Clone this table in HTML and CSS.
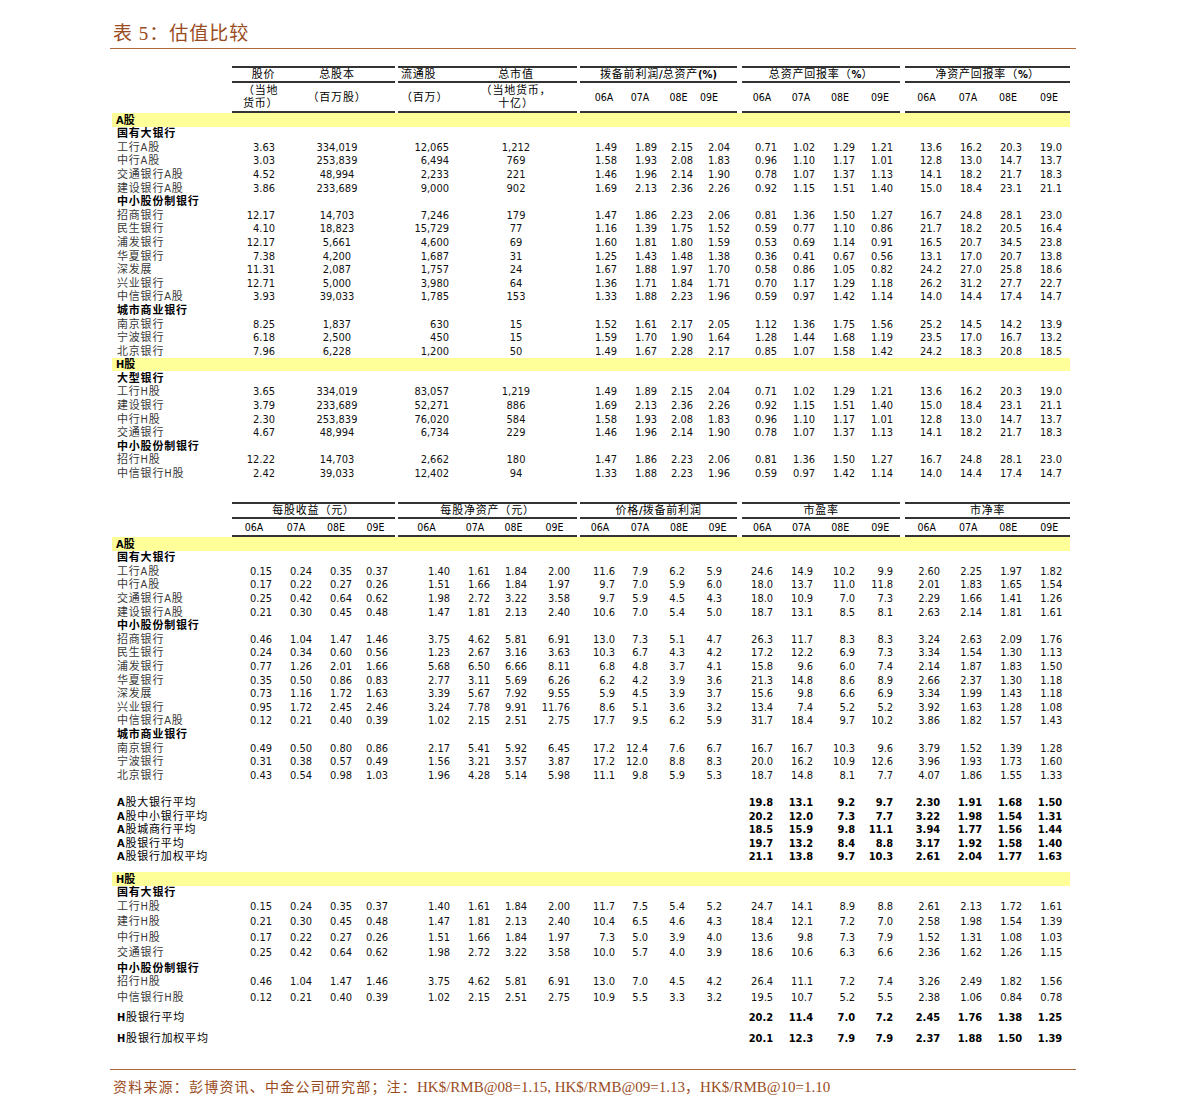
FILE: index.html
```html
<!DOCTYPE html>
<html lang="zh-CN">
<head>
<meta charset="utf-8">
<title>表 5：估值比较</title>
<link rel="stylesheet" href="styles.css">
</head>
<body>
<div class="page">
<h1 class="title">表 5：估值比较</h1>

<table class="tbl t1">
<colgroup><col class="w120"><col class="w63"><col class="w100"><col class="w3"><col class="w72"><col class="w107"><col class="w3"><col class="w40"><col class="w40"><col class="w37"><col class="w40"><col class="w5"><col class="w40"><col class="w38"><col class="w40"><col class="w40"><col class="w5"><col class="w43"><col class="w40"><col class="w40"><col class="w42"></colgroup>
<thead>
<tr class="h1"><th></th><th class="g">股价</th><th class="g pr16">总股本</th><th></th><th class="g l">流通股</th><th class="g pr15">总市值</th><th></th><th class="g" colspan="4">拨备前利润<b>/</b>总资产<b>(%)</b></th><th></th><th class="g" colspan="4">总资产回报率（<b>%</b>）</th><th></th><th class="g" colspan="4">净资产回报率（<b>%</b>）</th></tr>
<tr class="h2"><th></th><th class="s l2">（当地<br>货币）</th><th class="s pr16">（百万股）</th><th></th><th class="s l">（百万）</th><th class="s pr15">（当地货币，<br>十亿）</th><th></th><th class="s n pl8">06A</th><th class="s n">07A</th><th class="s n">08E</th><th class="s n pr16">09E</th><th></th><th class="s n">06A</th><th class="s n">07A</th><th class="s n">08E</th><th class="s n">09E</th><th></th><th class="s n">06A</th><th class="s n">07A</th><th class="s n">08E</th><th class="s n">09E</th></tr>
</thead>
<tbody>
<tr class="b"><td colspan="21"><b>A</b>股</td></tr>
<tr class="c"><td colspan="21">国有大银行</td></tr>
<tr class="d"><td>工行A股</td><td>3.63</td><td>334,019</td><td></td><td>12,065</td><td>1,212</td><td></td><td>1.49</td><td>1.89</td><td>2.15</td><td>2.04</td><td></td><td>0.71</td><td>1.02</td><td>1.29</td><td>1.21</td><td></td><td>13.6</td><td>16.2</td><td>20.3</td><td>19.0</td></tr>
<tr class="d"><td>中行A股</td><td>3.03</td><td>253,839</td><td></td><td>6,494</td><td>769</td><td></td><td>1.58</td><td>1.93</td><td>2.08</td><td>1.83</td><td></td><td>0.96</td><td>1.10</td><td>1.17</td><td>1.01</td><td></td><td>12.8</td><td>13.0</td><td>14.7</td><td>13.7</td></tr>
<tr class="d"><td>交通银行A股</td><td>4.52</td><td>48,994</td><td></td><td>2,233</td><td>221</td><td></td><td>1.46</td><td>1.96</td><td>2.14</td><td>1.90</td><td></td><td>0.78</td><td>1.07</td><td>1.37</td><td>1.13</td><td></td><td>14.1</td><td>18.2</td><td>21.7</td><td>18.3</td></tr>
<tr class="d"><td>建设银行A股</td><td>3.86</td><td>233,689</td><td></td><td>9,000</td><td>902</td><td></td><td>1.69</td><td>2.13</td><td>2.36</td><td>2.26</td><td></td><td>0.92</td><td>1.15</td><td>1.51</td><td>1.40</td><td></td><td>15.0</td><td>18.4</td><td>23.1</td><td>21.1</td></tr>
<tr class="c"><td colspan="21">中小股份制银行</td></tr>
<tr class="d"><td>招商银行</td><td>12.17</td><td>14,703</td><td></td><td>7,246</td><td>179</td><td></td><td>1.47</td><td>1.86</td><td>2.23</td><td>2.06</td><td></td><td>0.81</td><td>1.36</td><td>1.50</td><td>1.27</td><td></td><td>16.7</td><td>24.8</td><td>28.1</td><td>23.0</td></tr>
<tr class="d"><td>民生银行</td><td>4.10</td><td>18,823</td><td></td><td>15,729</td><td>77</td><td></td><td>1.16</td><td>1.39</td><td>1.75</td><td>1.52</td><td></td><td>0.59</td><td>0.77</td><td>1.10</td><td>0.86</td><td></td><td>21.7</td><td>18.2</td><td>20.5</td><td>16.4</td></tr>
<tr class="d"><td>浦发银行</td><td>12.17</td><td>5,661</td><td></td><td>4,600</td><td>69</td><td></td><td>1.60</td><td>1.81</td><td>1.80</td><td>1.59</td><td></td><td>0.53</td><td>0.69</td><td>1.14</td><td>0.91</td><td></td><td>16.5</td><td>20.7</td><td>34.5</td><td>23.8</td></tr>
<tr class="d"><td>华夏银行</td><td>7.38</td><td>4,200</td><td></td><td>1,687</td><td>31</td><td></td><td>1.25</td><td>1.43</td><td>1.48</td><td>1.38</td><td></td><td>0.36</td><td>0.41</td><td>0.67</td><td>0.56</td><td></td><td>13.1</td><td>17.0</td><td>20.7</td><td>13.8</td></tr>
<tr class="d"><td>深发展</td><td>11.31</td><td>2,087</td><td></td><td>1,757</td><td>24</td><td></td><td>1.67</td><td>1.88</td><td>1.97</td><td>1.70</td><td></td><td>0.58</td><td>0.86</td><td>1.05</td><td>0.82</td><td></td><td>24.2</td><td>27.0</td><td>25.8</td><td>18.6</td></tr>
<tr class="d"><td>兴业银行</td><td>12.71</td><td>5,000</td><td></td><td>3,980</td><td>64</td><td></td><td>1.36</td><td>1.71</td><td>1.84</td><td>1.71</td><td></td><td>0.70</td><td>1.17</td><td>1.29</td><td>1.18</td><td></td><td>26.2</td><td>31.2</td><td>27.7</td><td>22.7</td></tr>
<tr class="d"><td>中信银行A股</td><td>3.93</td><td>39,033</td><td></td><td>1,785</td><td>153</td><td></td><td>1.33</td><td>1.88</td><td>2.23</td><td>1.96</td><td></td><td>0.59</td><td>0.97</td><td>1.42</td><td>1.14</td><td></td><td>14.0</td><td>14.4</td><td>17.4</td><td>14.7</td></tr>
<tr class="c"><td colspan="21">城市商业银行</td></tr>
<tr class="d"><td>南京银行</td><td>8.25</td><td>1,837</td><td></td><td>630</td><td>15</td><td></td><td>1.52</td><td>1.61</td><td>2.17</td><td>2.05</td><td></td><td>1.12</td><td>1.36</td><td>1.75</td><td>1.56</td><td></td><td>25.2</td><td>14.5</td><td>14.2</td><td>13.9</td></tr>
<tr class="d"><td>宁波银行</td><td>6.18</td><td>2,500</td><td></td><td>450</td><td>15</td><td></td><td>1.59</td><td>1.70</td><td>1.90</td><td>1.64</td><td></td><td>1.28</td><td>1.44</td><td>1.68</td><td>1.19</td><td></td><td>23.5</td><td>17.0</td><td>16.7</td><td>13.2</td></tr>
<tr class="d"><td>北京银行</td><td>7.96</td><td>6,228</td><td></td><td>1,200</td><td>50</td><td></td><td>1.49</td><td>1.67</td><td>2.28</td><td>2.17</td><td></td><td>0.85</td><td>1.07</td><td>1.58</td><td>1.42</td><td></td><td>24.2</td><td>18.3</td><td>20.8</td><td>18.5</td></tr>
<tr class="b"><td colspan="21"><b>H</b>股</td></tr>
<tr class="c"><td colspan="21">大型银行</td></tr>
<tr class="d"><td>工行H股</td><td>3.65</td><td>334,019</td><td></td><td>83,057</td><td>1,219</td><td></td><td>1.49</td><td>1.89</td><td>2.15</td><td>2.04</td><td></td><td>0.71</td><td>1.02</td><td>1.29</td><td>1.21</td><td></td><td>13.6</td><td>16.2</td><td>20.3</td><td>19.0</td></tr>
<tr class="d"><td>建设银行</td><td>3.79</td><td>233,689</td><td></td><td>52,271</td><td>886</td><td></td><td>1.69</td><td>2.13</td><td>2.36</td><td>2.26</td><td></td><td>0.92</td><td>1.15</td><td>1.51</td><td>1.40</td><td></td><td>15.0</td><td>18.4</td><td>23.1</td><td>21.1</td></tr>
<tr class="d"><td>中行H股</td><td>2.30</td><td>253,839</td><td></td><td>76,020</td><td>584</td><td></td><td>1.58</td><td>1.93</td><td>2.08</td><td>1.83</td><td></td><td>0.96</td><td>1.10</td><td>1.17</td><td>1.01</td><td></td><td>12.8</td><td>13.0</td><td>14.7</td><td>13.7</td></tr>
<tr class="d"><td>交通银行</td><td>4.67</td><td>48,994</td><td></td><td>6,734</td><td>229</td><td></td><td>1.46</td><td>1.96</td><td>2.14</td><td>1.90</td><td></td><td>0.78</td><td>1.07</td><td>1.37</td><td>1.13</td><td></td><td>14.1</td><td>18.2</td><td>21.7</td><td>18.3</td></tr>
<tr class="c"><td colspan="21">中小股份制银行</td></tr>
<tr class="d"><td>招行H股</td><td>12.22</td><td>14,703</td><td></td><td>2,662</td><td>180</td><td></td><td>1.47</td><td>1.86</td><td>2.23</td><td>2.06</td><td></td><td>0.81</td><td>1.36</td><td>1.50</td><td>1.27</td><td></td><td>16.7</td><td>24.8</td><td>28.1</td><td>23.0</td></tr>
<tr class="d"><td>中信银行H股</td><td>2.42</td><td>39,033</td><td></td><td>12,402</td><td>94</td><td></td><td>1.33</td><td>1.88</td><td>2.23</td><td>1.96</td><td></td><td>0.59</td><td>0.97</td><td>1.42</td><td>1.14</td><td></td><td>14.0</td><td>14.4</td><td>17.4</td><td>14.7</td></tr>
</tbody>
</table>

<table class="tbl t2">
<colgroup><col class="w120"><col class="w44"><col class="w40"><col class="w40"><col class="w39"><col class="w3"><col class="w57"><col class="w40"><col class="w37"><col class="w45"><col class="w3"><col class="w40"><col class="w40"><col class="w38"><col class="w39"><col class="w5"><col class="w40"><col class="w38"><col class="w40"><col class="w40"><col class="w5"><col class="w43"><col class="w40"><col class="w40"><col class="w42"></colgroup>
<thead>
<tr class="h1"><th></th><th class="g" colspan="4">每股收益（元）</th><th></th><th class="g" colspan="4">每股净资产（元）</th><th></th><th class="g" colspan="4">价格<b>/</b>拨备前利润</th><th></th><th class="g" colspan="4">市盈率</th><th></th><th class="g" colspan="4">市净率</th></tr>
<tr class="h2"><th></th><th class="s n">06A</th><th class="s n">07A</th><th class="s n">08E</th><th class="s n">09E</th><th></th><th class="s n">06A</th><th class="s n">07A</th><th class="s n">08E</th><th class="s n">09E</th><th></th><th class="s n">06A</th><th class="s n">07A</th><th class="s n">08E</th><th class="s n">09E</th><th></th><th class="s n">06A</th><th class="s n">07A</th><th class="s n">08E</th><th class="s n">09E</th><th></th><th class="s n">06A</th><th class="s n">07A</th><th class="s n">08E</th><th class="s n">09E</th></tr>
</thead>
<tbody>
<tr class="b"><td colspan="25"><b>A</b>股</td></tr>
<tr class="c"><td colspan="25">国有大银行</td></tr>
<tr class="d"><td>工行A股</td><td>0.15</td><td>0.24</td><td>0.35</td><td>0.37</td><td></td><td>1.40</td><td>1.61</td><td>1.84</td><td>2.00</td><td></td><td>11.6</td><td>7.9</td><td>6.2</td><td>5.9</td><td></td><td>24.6</td><td>14.9</td><td>10.2</td><td>9.9</td><td></td><td>2.60</td><td>2.25</td><td>1.97</td><td>1.82</td></tr>
<tr class="d"><td>中行A股</td><td>0.17</td><td>0.22</td><td>0.27</td><td>0.26</td><td></td><td>1.51</td><td>1.66</td><td>1.84</td><td>1.97</td><td></td><td>9.7</td><td>7.0</td><td>5.9</td><td>6.0</td><td></td><td>18.0</td><td>13.7</td><td>11.0</td><td>11.8</td><td></td><td>2.01</td><td>1.83</td><td>1.65</td><td>1.54</td></tr>
<tr class="d"><td>交通银行A股</td><td>0.25</td><td>0.42</td><td>0.64</td><td>0.62</td><td></td><td>1.98</td><td>2.72</td><td>3.22</td><td>3.58</td><td></td><td>9.7</td><td>5.9</td><td>4.5</td><td>4.3</td><td></td><td>18.0</td><td>10.9</td><td>7.0</td><td>7.3</td><td></td><td>2.29</td><td>1.66</td><td>1.41</td><td>1.26</td></tr>
<tr class="d"><td>建设银行A股</td><td>0.21</td><td>0.30</td><td>0.45</td><td>0.48</td><td></td><td>1.47</td><td>1.81</td><td>2.13</td><td>2.40</td><td></td><td>10.6</td><td>7.0</td><td>5.4</td><td>5.0</td><td></td><td>18.7</td><td>13.1</td><td>8.5</td><td>8.1</td><td></td><td>2.63</td><td>2.14</td><td>1.81</td><td>1.61</td></tr>
<tr class="c"><td colspan="25">中小股份制银行</td></tr>
<tr class="d"><td>招商银行</td><td>0.46</td><td>1.04</td><td>1.47</td><td>1.46</td><td></td><td>3.75</td><td>4.62</td><td>5.81</td><td>6.91</td><td></td><td>13.0</td><td>7.3</td><td>5.1</td><td>4.7</td><td></td><td>26.3</td><td>11.7</td><td>8.3</td><td>8.3</td><td></td><td>3.24</td><td>2.63</td><td>2.09</td><td>1.76</td></tr>
<tr class="d"><td>民生银行</td><td>0.24</td><td>0.34</td><td>0.60</td><td>0.56</td><td></td><td>1.23</td><td>2.67</td><td>3.16</td><td>3.63</td><td></td><td>10.3</td><td>6.7</td><td>4.3</td><td>4.2</td><td></td><td>17.2</td><td>12.2</td><td>6.9</td><td>7.3</td><td></td><td>3.34</td><td>1.54</td><td>1.30</td><td>1.13</td></tr>
<tr class="d"><td>浦发银行</td><td>0.77</td><td>1.26</td><td>2.01</td><td>1.66</td><td></td><td>5.68</td><td>6.50</td><td>6.66</td><td>8.11</td><td></td><td>6.8</td><td>4.8</td><td>3.7</td><td>4.1</td><td></td><td>15.8</td><td>9.6</td><td>6.0</td><td>7.4</td><td></td><td>2.14</td><td>1.87</td><td>1.83</td><td>1.50</td></tr>
<tr class="d"><td>华夏银行</td><td>0.35</td><td>0.50</td><td>0.86</td><td>0.83</td><td></td><td>2.77</td><td>3.11</td><td>5.69</td><td>6.26</td><td></td><td>6.2</td><td>4.2</td><td>3.9</td><td>3.6</td><td></td><td>21.3</td><td>14.8</td><td>8.6</td><td>8.9</td><td></td><td>2.66</td><td>2.37</td><td>1.30</td><td>1.18</td></tr>
<tr class="d"><td>深发展</td><td>0.73</td><td>1.16</td><td>1.72</td><td>1.63</td><td></td><td>3.39</td><td>5.67</td><td>7.92</td><td>9.55</td><td></td><td>5.9</td><td>4.5</td><td>3.9</td><td>3.7</td><td></td><td>15.6</td><td>9.8</td><td>6.6</td><td>6.9</td><td></td><td>3.34</td><td>1.99</td><td>1.43</td><td>1.18</td></tr>
<tr class="d"><td>兴业银行</td><td>0.95</td><td>1.72</td><td>2.45</td><td>2.46</td><td></td><td>3.24</td><td>7.78</td><td>9.91</td><td>11.76</td><td></td><td>8.6</td><td>5.1</td><td>3.6</td><td>3.2</td><td></td><td>13.4</td><td>7.4</td><td>5.2</td><td>5.2</td><td></td><td>3.92</td><td>1.63</td><td>1.28</td><td>1.08</td></tr>
<tr class="d"><td>中信银行A股</td><td>0.12</td><td>0.21</td><td>0.40</td><td>0.39</td><td></td><td>1.02</td><td>2.15</td><td>2.51</td><td>2.75</td><td></td><td>17.7</td><td>9.5</td><td>6.2</td><td>5.9</td><td></td><td>31.7</td><td>18.4</td><td>9.7</td><td>10.2</td><td></td><td>3.86</td><td>1.82</td><td>1.57</td><td>1.43</td></tr>
<tr class="c"><td colspan="25">城市商业银行</td></tr>
<tr class="d"><td>南京银行</td><td>0.49</td><td>0.50</td><td>0.80</td><td>0.86</td><td></td><td>2.17</td><td>5.41</td><td>5.92</td><td>6.45</td><td></td><td>17.2</td><td>12.4</td><td>7.6</td><td>6.7</td><td></td><td>16.7</td><td>16.7</td><td>10.3</td><td>9.6</td><td></td><td>3.79</td><td>1.52</td><td>1.39</td><td>1.28</td></tr>
<tr class="d"><td>宁波银行</td><td>0.31</td><td>0.38</td><td>0.57</td><td>0.49</td><td></td><td>1.56</td><td>3.21</td><td>3.57</td><td>3.87</td><td></td><td>17.2</td><td>12.0</td><td>8.8</td><td>8.3</td><td></td><td>20.0</td><td>16.2</td><td>10.9</td><td>12.6</td><td></td><td>3.96</td><td>1.93</td><td>1.73</td><td>1.60</td></tr>
<tr class="d"><td>北京银行</td><td>0.43</td><td>0.54</td><td>0.98</td><td>1.03</td><td></td><td>1.96</td><td>4.28</td><td>5.14</td><td>5.98</td><td></td><td>11.1</td><td>9.8</td><td>5.9</td><td>5.3</td><td></td><td>18.7</td><td>14.8</td><td>8.1</td><td>7.7</td><td></td><td>4.07</td><td>1.86</td><td>1.55</td><td>1.33</td></tr>
<tr class="e"><td colspan="25"></td></tr>
<tr class="d a"><td><b>A</b>股大银行平均</td><td></td><td></td><td></td><td></td><td></td><td></td><td></td><td></td><td></td><td></td><td></td><td></td><td></td><td></td><td></td><td>19.8</td><td>13.1</td><td>9.2</td><td>9.7</td><td></td><td>2.30</td><td>1.91</td><td>1.68</td><td>1.50</td></tr>
<tr class="d a"><td><b>A</b>股中小银行平均</td><td></td><td></td><td></td><td></td><td></td><td></td><td></td><td></td><td></td><td></td><td></td><td></td><td></td><td></td><td></td><td>20.2</td><td>12.0</td><td>7.3</td><td>7.7</td><td></td><td>3.22</td><td>1.98</td><td>1.54</td><td>1.31</td></tr>
<tr class="d a"><td><b>A</b>股城商行平均</td><td></td><td></td><td></td><td></td><td></td><td></td><td></td><td></td><td></td><td></td><td></td><td></td><td></td><td></td><td></td><td>18.5</td><td>15.9</td><td>9.8</td><td>11.1</td><td></td><td>3.94</td><td>1.77</td><td>1.56</td><td>1.44</td></tr>
<tr class="d a"><td><b>A</b>股银行平均</td><td></td><td></td><td></td><td></td><td></td><td></td><td></td><td></td><td></td><td></td><td></td><td></td><td></td><td></td><td></td><td>19.7</td><td>13.2</td><td>8.4</td><td>8.8</td><td></td><td>3.17</td><td>1.92</td><td>1.58</td><td>1.40</td></tr>
<tr class="d a"><td><b>A</b>股银行加权平均</td><td></td><td></td><td></td><td></td><td></td><td></td><td></td><td></td><td></td><td></td><td></td><td></td><td></td><td></td><td></td><td>21.1</td><td>13.8</td><td>9.7</td><td>10.3</td><td></td><td>2.61</td><td>2.04</td><td>1.77</td><td>1.63</td></tr>
<tr class="gap"><td colspan="25"></td></tr>
<tr class="b"><td colspan="25"><b>H</b>股</td></tr>
<tr class="c"><td colspan="25">国有大银行</td></tr>
<tr class="d"><td>工行H股</td><td>0.15</td><td>0.24</td><td>0.35</td><td>0.37</td><td></td><td>1.40</td><td>1.61</td><td>1.84</td><td>2.00</td><td></td><td>11.7</td><td>7.5</td><td>5.4</td><td>5.2</td><td></td><td>24.7</td><td>14.1</td><td>8.9</td><td>8.8</td><td></td><td>2.61</td><td>2.13</td><td>1.72</td><td>1.61</td></tr>
<tr class="d r15"><td>建行H股</td><td>0.21</td><td>0.30</td><td>0.45</td><td>0.48</td><td></td><td>1.47</td><td>1.81</td><td>2.13</td><td>2.40</td><td></td><td>10.4</td><td>6.5</td><td>4.6</td><td>4.3</td><td></td><td>18.4</td><td>12.1</td><td>7.2</td><td>7.0</td><td></td><td>2.58</td><td>1.98</td><td>1.54</td><td>1.39</td></tr>
<tr class="d r16"><td>中行H股</td><td>0.17</td><td>0.22</td><td>0.27</td><td>0.26</td><td></td><td>1.51</td><td>1.66</td><td>1.84</td><td>1.97</td><td></td><td>7.3</td><td>5.0</td><td>3.9</td><td>4.0</td><td></td><td>13.6</td><td>9.8</td><td>7.3</td><td>7.9</td><td></td><td>1.52</td><td>1.31</td><td>1.08</td><td>1.03</td></tr>
<tr class="d r15"><td>交通银行</td><td>0.25</td><td>0.42</td><td>0.64</td><td>0.62</td><td></td><td>1.98</td><td>2.72</td><td>3.22</td><td>3.58</td><td></td><td>10.0</td><td>5.7</td><td>4.0</td><td>3.9</td><td></td><td>18.6</td><td>10.6</td><td>6.3</td><td>6.6</td><td></td><td>2.36</td><td>1.62</td><td>1.26</td><td>1.15</td></tr>
<tr class="c r16"><td colspan="25">中小股份制银行</td></tr>
<tr class="d r13"><td>招行H股</td><td>0.46</td><td>1.04</td><td>1.47</td><td>1.46</td><td></td><td>3.75</td><td>4.62</td><td>5.81</td><td>6.91</td><td></td><td>13.0</td><td>7.0</td><td>4.5</td><td>4.2</td><td></td><td>26.4</td><td>11.1</td><td>7.2</td><td>7.4</td><td></td><td>3.26</td><td>2.49</td><td>1.82</td><td>1.56</td></tr>
<tr class="d r16"><td>中信银行H股</td><td>0.12</td><td>0.21</td><td>0.40</td><td>0.39</td><td></td><td>1.02</td><td>2.15</td><td>2.51</td><td>2.75</td><td></td><td>10.9</td><td>5.5</td><td>3.3</td><td>3.2</td><td></td><td>19.5</td><td>10.7</td><td>5.2</td><td>5.5</td><td></td><td>2.38</td><td>1.06</td><td>0.84</td><td>0.78</td></tr>
<tr class="d a r20"><td><b>H</b>股银行平均</td><td></td><td></td><td></td><td></td><td></td><td></td><td></td><td></td><td></td><td></td><td></td><td></td><td></td><td></td><td></td><td>20.2</td><td>11.4</td><td>7.0</td><td>7.2</td><td></td><td>2.45</td><td>1.76</td><td>1.38</td><td>1.25</td></tr>
<tr class="d a r21"><td><b>H</b>股银行加权平均</td><td></td><td></td><td></td><td></td><td></td><td></td><td></td><td></td><td></td><td></td><td></td><td></td><td></td><td></td><td></td><td>20.1</td><td>12.3</td><td>7.9</td><td>7.9</td><td></td><td>2.37</td><td>1.88</td><td>1.50</td><td>1.39</td></tr>
</tbody>
</table>

<div class="foot"><span class="cn">资料来源：彭博资讯、中金公司研究部；注：</span>HK$/RMB@08=1.15, HK$/RMB@09=1.13<span class="cn">，</span>HK$/RMB@10=1.10</div>
</div>
</body>
</html>
```

FILE: styles.css
```css
html, body { margin: 0; padding: 0; background: #fff; }
.page { margin-left: 110px; width: 966px; }

.title {
  margin: 0;
  padding: 22px 0 2px 3px;
  font: normal 19px/24px "Liberation Serif", "Noto Sans CJK SC", serif;
  letter-spacing: 1px;
  color: #9a4b22;
  border-bottom: 1px solid #b4693c;
}

.tbl {
  border-collapse: separate;
  border-spacing: 0;
  table-layout: fixed;
  width: 958px;
  margin-left: 2px;
  font-family: "DejaVu Sans Condensed", "DejaVu Sans", "Noto Sans CJK SC", sans-serif;
  font-stretch: condensed;
  font-size: 11px;
  color: #111;
}
.t1 { margin-top: 17px; }
.t2 { margin-top: 22px; }

.w3 { width: 3px; } .w5 { width: 5px; } .w37 { width: 37px; } .w38 { width: 38px; }
.w39 { width: 39px; } .w40 { width: 40px; } .w42 { width: 42px; } .w43 { width: 43px; }
.w44 { width: 44px; } .w45 { width: 45px; } .w57 { width: 57px; } .w63 { width: 63px; }
.w72 { width: 72px; } .w100 { width: 100px; } .w107 { width: 107px; } .w120 { width: 120px; }

.tbl td, .tbl th {
  padding: 0;
  white-space: nowrap;
  line-height: 13px;
  font-weight: normal;
  overflow: visible;
}
.tbl td { vertical-align: bottom; text-align: right; }
.tbl th {
  vertical-align: middle;
  text-align: center;
  color: #000;
  letter-spacing: 0.8px;
}
.tbl th b { font-weight: bold; letter-spacing: 0; }
.tbl th.n { font-size: 10.5px; letter-spacing: 0; }

.g { border-top: 2px solid #333; border-bottom: 2px solid #333; }
.s { border-bottom: 2px solid #333; }
.t1 .h1 { height: 16px; }
.t1 .h2 { height: 30px; }
.t2 .h1 { height: 17px; }
.t2 .h2 { height: 18px; }
.tbl th.l { text-align: left; padding-left: 3px; }
.tbl th.l2 { text-align: left; padding-left: 11px; }
.tbl th.pr16 { padding-right: 16px; }
.tbl th.pr15 { padding-right: 15px; }
.tbl th.pl8 { padding-left: 8px; }

.tbl tbody tr { height: 13.6px; }
.tbl tbody tr.r13 { height: 13px; }
.tbl tbody tr.r15 { height: 15px; }
.tbl tbody tr.r16 { height: 16px; }
.tbl tbody tr.r20 { height: 20px; }
.tbl tbody tr.r21 { height: 21px; }
.tbl tbody tr.gap { height: 9px; }

.b td {
  background: #ffff99;
  text-align: left;
  padding-left: 4px;
  font-weight: bold;
  color: #000;
}
.c td {
  text-align: left;
  padding-left: 5px;
  font-weight: bold;
  color: #000;
  letter-spacing: 0.8px;
}
.d td:first-child {
  text-align: left;
  padding-left: 5px;
  color: #3a3a3a;
  letter-spacing: 0.8px;
}
.a td { font-weight: bold; color: #000; }
.a td:first-child { color: #000; font-weight: normal; }
.a td:first-child b { font-weight: bold; }

/* table 1 column alignment */
.t1 .d td:nth-child(2) { padding-right: 20px; }
.t1 .d td:nth-child(3) { text-align: center; padding-right: 16px; }
.t1 .d td:nth-child(5) { padding-right: 21px; }
.t1 .d td:nth-child(6) { text-align: center; padding-right: 15px; }
.t1 .d td:nth-child(8) { padding-right: 3px; }
.t1 .d td:nth-child(9) { padding-right: 3px; }
.t1 .d td:nth-child(10) { padding-right: 4px; }
.t1 .d td:nth-child(11) { padding-right: 7px; }
.t1 .d td:nth-child(13) { padding-right: 5px; }
.t1 .d td:nth-child(14) { padding-right: 5px; }
.t1 .d td:nth-child(15) { padding-right: 5px; }
.t1 .d td:nth-child(16) { padding-right: 7px; }
.t1 .d td:nth-child(18) { padding-right: 6px; }
.t1 .d td:nth-child(19) { padding-right: 6px; }
.t1 .d td:nth-child(20) { padding-right: 6px; }
.t1 .d td:nth-child(21) { padding-right: 8px; }

/* table 2 column alignment */
.t2 .d td:nth-child(2) { padding-right: 4px; }
.t2 .d td:nth-child(3) { padding-right: 4px; }
.t2 .d td:nth-child(4) { padding-right: 4px; }
.t2 .d td:nth-child(5) { padding-right: 7px; }
.t2 .d td:nth-child(7) { padding-right: 5px; }
.t2 .d td:nth-child(8) { padding-right: 5px; }
.t2 .d td:nth-child(9) { padding-right: 5px; }
.t2 .d td:nth-child(10) { padding-right: 7px; }
.t2 .d td:nth-child(12) { padding-right: 5px; }
.t2 .d td:nth-child(13) { padding-right: 12px; }
.t2 .d td:nth-child(14) { padding-right: 13px; }
.t2 .d td:nth-child(15) { padding-right: 15px; }
.t2 .d td:nth-child(17) { padding-right: 9px; }
.t2 .d td:nth-child(18) { padding-right: 7px; }
.t2 .d td:nth-child(19) { padding-right: 5px; }
.t2 .d td:nth-child(20) { padding-right: 7px; }
.t2 .d td:nth-child(22) { padding-right: 8px; }
.t2 .d td:nth-child(23) { padding-right: 6px; }
.t2 .d td:nth-child(24) { padding-right: 6px; }
.t2 .d td:nth-child(25) { padding-right: 8px; }

.foot {
  margin-top: 24px;
  border-top: 1px solid #a9683f;
  padding: 7px 0 0 3px;
  font: 15px/20px "Liberation Serif", "Noto Sans CJK SC", serif;
  color: #9a4b22;
}
.foot .cn { font-size: 14px; letter-spacing: 1.2px; }
```
